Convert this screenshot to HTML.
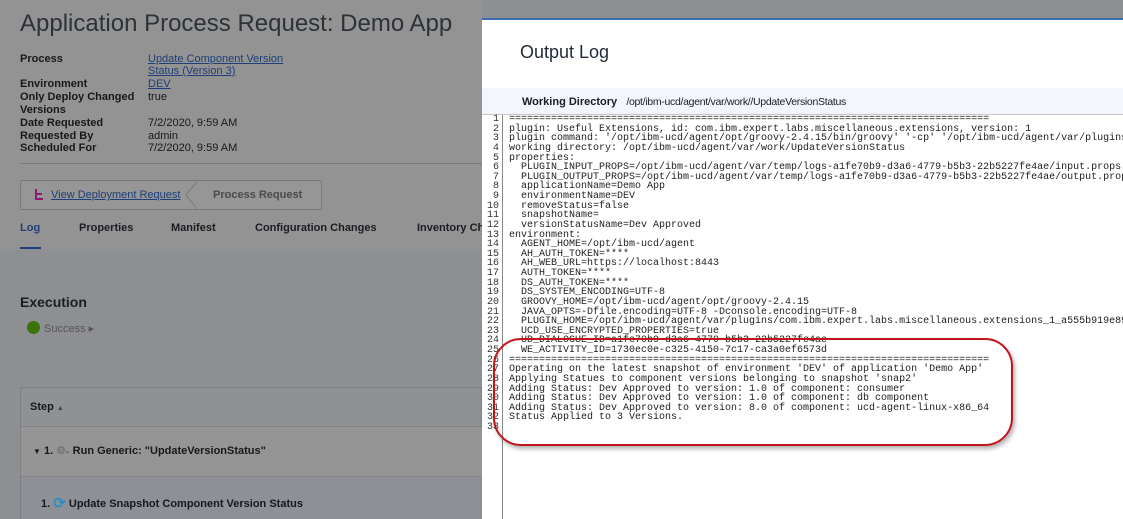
<!DOCTYPE html>
<html><head><meta charset="utf-8"><style>
*{margin:0;padding:0;box-sizing:border-box}
body{width:1123px;height:519px;overflow:hidden;position:relative;background:#8e8f92;font-family:"Liberation Sans",sans-serif;color:#1a1d21}
.top{position:absolute;left:0;top:0;width:482px;height:249px;background:#939393}
.a{position:absolute;white-space:nowrap}
h1{position:absolute;left:20px;top:10px;font-weight:normal;font-size:24px;color:#2d3239;white-space:nowrap}
.lb{font-size:11px;font-weight:bold;color:#16191c}
.v{font-size:11px;color:#16191c}
.lk{color:#1f3f78;text-decoration:underline}
.tab{font-size:11px;font-weight:bold;top:222px}
.log{position:absolute;left:482px;top:18px;width:641px;height:501px;background:#fff;border-top:2px solid #3b6eb0;overflow:hidden}
pre.a{white-space:pre;font-family:"Liberation Mono","DejaVu Sans Mono",monospace;font-size:10px;line-height:9.63px;color:#222}
</style></head><body>
<div class="top"></div>
<h1>Application Process Request: Demo App</h1>
<div class="a lb" style="left:20px;top:53px">Process</div>
<div class="a v lk" style="left:148px;top:53px;line-height:12px">Update Component Version<br>Status (Version 3)</div>
<div class="a lb" style="left:20px;top:78px">Environment</div>
<div class="a v lk" style="left:148px;top:78px">DEV</div>
<div class="a lb" style="left:20px;top:91px;line-height:13px">Only Deploy Changed<br>Versions</div>
<div class="a v" style="left:148px;top:91px">true</div>
<div class="a lb" style="left:20px;top:117px;line-height:12.5px">Date Requested<br>Requested By<br>Scheduled For</div>
<div class="a v" style="left:148px;top:117px;line-height:12.5px">7/2/2020, 9:59 AM<br>admin<br>7/2/2020, 9:59 AM</div>
<div class="a" style="left:20px;top:163px;width:462px;height:1px;background:#7c7c7c"></div>
<div class="a" style="left:20px;top:180px;width:302px;height:30px;border:1px solid #7a7a7a;border-radius:2px;background:#969696"></div>
<svg class="a" style="left:182px;top:180px" width="20" height="30"><polyline points="16,0 4,15 16,30" fill="none" stroke="#7a7a7a"/></svg>
<svg class="a" style="left:33px;top:188px" width="12" height="13"><path d="M3 1V11H10M3 6H9" fill="none" stroke="#8a1d6e" stroke-width="2"/></svg>
<div class="a v lk" style="left:51px;top:189px">View Deployment Request</div>
<div class="a v" style="left:213px;top:189px;color:#4a4a4a;font-weight:bold">Process Request</div>
<div class="a tab" style="left:20px;color:#1f3f78">Log</div>
<div class="a" style="left:20px;top:247px;width:21px;height:2px;background:#1f3f78"></div>
<div class="a tab" style="left:79px">Properties</div>
<div class="a tab" style="left:171px">Manifest</div>
<div class="a tab" style="left:255px">Configuration Changes</div>
<div class="a tab" style="left:417px">Inventory Ch</div>
<div class="a" style="left:20px;top:294px;font-size:14px;font-weight:bold">Execution</div>
<div class="a" style="left:27px;top:321px;width:13px;height:13px;border-radius:50%;background:#3a7307"></div>
<div class="a v" style="left:44px;top:322px;color:#555">Success ▸</div>
<div class="a" style="left:20px;top:387px;width:462px;height:132px;border:1px solid #7f8083;background:#909193"></div>
<div class="a" style="left:21px;top:426px;width:461px;height:51px;background:#959595;border-top:1px solid #838383;border-bottom:1px solid #838383"></div>
<div class="a" style="left:21px;top:477px;width:461px;height:42px;background:#8d9095"></div>
<div class="a lb" style="left:30px;top:401px">Step <span style="font-size:7px;color:#444">▲</span></div>
<div class="a lb" style="left:33px;top:444px"><span style="font-size:8px">▼</span> 1. <span style="color:#777">⚙</span><span style="font-size:7px;color:#777">▸</span> Run Generic: "UpdateVersionStatus"</div>
<div class="a lb" style="left:41px;top:494px">1. <span style="color:#2d8ec4;font-size:15px;vertical-align:-1px">⟳</span> Update Snapshot Component Version Status</div>
<div class="log">
<div class="a" style="left:38px;top:22px;font-size:18px;color:#1f2a36">Output Log</div>
<div class="a" style="left:0;top:68px;width:641px;height:26px;background:#f3f6fa"></div>
<div class="a" style="left:40px;top:76px;font-size:11px"><b>Working Directory</b> &nbsp;&nbsp;<span style="font-size:10.5px;letter-spacing:-0.3px">/opt/ibm-ucd/agent/var/work//UpdateVersionStatus</span></div>
<div class="a" style="left:0;top:94px;width:641px;height:1px;background:#c8c8c8"></div>
<div class="a" style="left:20px;top:95px;width:1px;height:406px;background:#888"></div>
<pre class="a" style="left:3px;top:95px;color:#333;text-align:right;width:14px">1
2
3
4
5
6
7
8
9
10
11
12
13
14
15
16
17
18
19
20
21
22
23
24
25
26
27
28
29
30
31
32
33</pre>
<pre class="a" style="left:27px;top:95px">================================================================================
plugin: Useful Extensions, id: com.ibm.expert.labs.miscellaneous.extensions, version: 1
plugin command: '/opt/ibm-ucd/agent/opt/groovy-2.4.15/bin/groovy' '-cp' '/opt/ibm-ucd/agent/var/plugins
working directory: /opt/ibm-ucd/agent/var/work/UpdateVersionStatus
properties:
  PLUGIN_INPUT_PROPS=/opt/ibm-ucd/agent/var/temp/logs-a1fe70b9-d3a6-4779-b5b3-22b5227fe4ae/input.props
  PLUGIN_OUTPUT_PROPS=/opt/ibm-ucd/agent/var/temp/logs-a1fe70b9-d3a6-4779-b5b3-22b5227fe4ae/output.props
  applicationName=Demo App
  environmentName=DEV
  removeStatus=false
  snapshotName=
  versionStatusName=Dev Approved
environment:
  AGENT_HOME=/opt/ibm-ucd/agent
  AH_AUTH_TOKEN=****
  AH_WEB_URL=https://localhost:8443
  AUTH_TOKEN=****
  DS_AUTH_TOKEN=****
  DS_SYSTEM_ENCODING=UTF-8
  GROOVY_HOME=/opt/ibm-ucd/agent/opt/groovy-2.4.15
  JAVA_OPTS=-Dfile.encoding=UTF-8 -Dconsole.encoding=UTF-8
  PLUGIN_HOME=/opt/ibm-ucd/agent/var/plugins/com.ibm.expert.labs.miscellaneous.extensions_1_a555b919e89
  UCD_USE_ENCRYPTED_PROPERTIES=true
  UD_DIALOGUE_ID=a1fe70b9-d3a6-4779-b5b3-22b5227fe4ae
  WE_ACTIVITY_ID=1730ec0e-c325-4150-7c17-ca3a0ef6573d
================================================================================
Operating on the latest snapshot of environment 'DEV' of application 'Demo App'
Applying Statues to component versions belonging to snapshot 'snap2'
Adding Status: Dev Approved to version: 1.0 of component: consumer
Adding Status: Dev Approved to version: 1.0 of component: db component
Adding Status: Dev Approved to version: 8.0 of component: ucd-agent-linux-x86_64
Status Applied to 3 Versions.
</pre>
<div class="a" style="left:11px;top:318px;width:520px;height:108px;border:2px solid #c3141c;border-radius:28px;box-shadow:2px 3px 4px rgba(0,0,0,0.3)"></div>
</div>
</body></html>
